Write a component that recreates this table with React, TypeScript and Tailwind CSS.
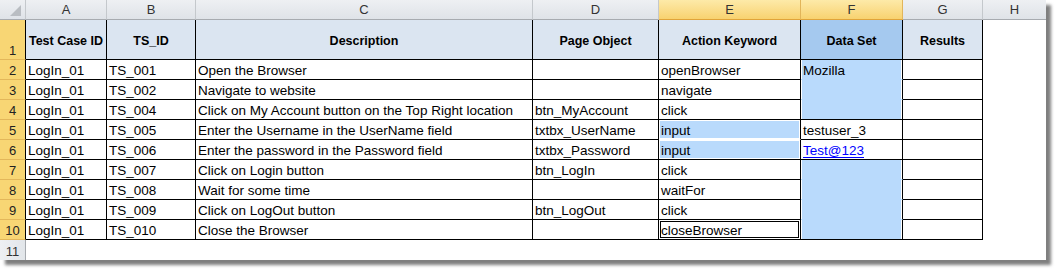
import clsx from 'clsx';

const COLS = ['A', 'B', 'C', 'D', 'E', 'F', 'G', 'H'];
const SELECTED_COLS = ['E', 'F'];

const HEADERS = ['Test Case ID', 'TS_ID', 'Description', 'Page Object', 'Action Keyword', 'Data Set', 'Results'];

type Row = [string, string, string, string, string, string];

const ROWS: Row[] = [
  ['LogIn_01', 'TS_001', 'Open the Browser', '', 'openBrowser', 'Mozilla'],
  ['LogIn_01', 'TS_002', 'Navigate to website', '', 'navigate', ''],
  ['LogIn_01', 'TS_004', 'Click on My Account button on the Top Right location', 'btn_MyAccount', 'click', ''],
  ['LogIn_01', 'TS_005', 'Enter the Username in the UserName field', 'txtbx_UserName', 'input', 'testuser_3'],
  ['LogIn_01', 'TS_006', 'Enter the password in the Password field', 'txtbx_Password', 'input', 'Test@123'],
  ['LogIn_01', 'TS_007', 'Click on Login button', 'btn_LogIn', 'click', ''],
  ['LogIn_01', 'TS_008', 'Wait for some time', '', 'waitFor', ''],
  ['LogIn_01', 'TS_009', 'Click on LogOut button', 'btn_LogOut', 'click', ''],
  ['LogIn_01', 'TS_010', 'Close the Browser', '', 'closeBrowser', ''],
];

// selected blocks: F2:F4, E5:E6, F7:F10 (row numbers are sheet rows)
const selF = (r: number) => (r >= 2 && r <= 4) || (r >= 7 && r <= 10);
const selE = (r: number) => r === 5 || r === 6;

function ColHeader({ label }: { label: string }) {
  const sel = SELECTED_COLS.includes(label);
  return (
    <div
      className={clsx(
        'flex items-center justify-center border-b border-r text-[13px] text-[#333]',
        sel
          ? 'bg-gradient-to-b from-[#fdeaa8] to-[#f8d26f] border-b-[#e0a43a] border-r-[#e2b55a]'
          : 'bg-gradient-to-b from-[#eef0f3] to-[#dfe3e8] border-b-[#a7abb0] border-r-[#c4c8cc]',
        label === 'H' && 'border-r-0'
      )}
    >
      {label}
    </div>
  );
}

function RowHeader({ n }: { n: number }) {
  const sel = n <= 10;
  return (
    <div
      className={clsx(
        'flex items-end justify-center border-b border-r pb-px text-[13px] leading-[15px]',
        sel
          ? 'bg-[#f8d674] border-b-[#e3b75a] border-r-black text-[#222]'
          : 'bg-gradient-to-r from-[#eef0f3] to-[#e2e6ea] border-b-0 border-r-[#a7abb0] text-[#333]'
      )}
    >
      {n}
    </div>
  );
}

export default function App() {
  return (
    <div className="h-[274px] w-[1061px] bg-white" style={{ fontFamily: '"Liberation Sans", Arial, sans-serif' }}>
      <div className="grid h-[260px] w-[1046px] grid-cols-[26px_81px_89px_337px_126px_142px_102px_80px_63px] grid-rows-[20px_40px_repeat(10,20px)] bg-white text-black shadow-[5px_5px_3px_rgba(0,0,0,0.5)]">
        {/* column letters */}
        <div className="relative border-b border-r border-b-[#a7abb0] border-r-[#c4c8cc] bg-gradient-to-b from-[#eef0f3] to-[#dfe3e8]">
          <svg className="absolute bottom-[3px] right-[4px]" width="11" height="11" viewBox="0 0 11 11">
            <polygon points="11,0 11,11 0,11" fill="#b9bdc2" />
          </svg>
        </div>
        {COLS.map((c) => (
          <ColHeader key={c} label={c} />
        ))}

        {/* row 1: table headers */}
        <RowHeader n={1} />
        {HEADERS.map((h) => (
          <div
            key={h}
            className={clsx(
              'flex items-center justify-center whitespace-nowrap border-b border-r border-black pt-[3px] text-[12.5px] font-bold',
              h === 'Data Set' ? 'bg-[#a5c9ef]' : 'bg-[#dbe5f1]'
            )}
          >
            {h}
          </div>
        ))}
        <div />

        {/* rows 2 - 10 */}
        {ROWS.map((row, i) => {
          const r = i + 2;
          return [
            <RowHeader key={`h${r}`} n={r} />,
            ...row.map((val, ci) => {
              const col = COLS[ci];
              const isE = col === 'E';
              const isF = col === 'F';
              const blueF = isF && selF(r);
              const blueE = isE && selE(r);
              return (
                <div
                  key={`${r}${col}`}
                  className={clsx(
                    'relative flex items-end overflow-hidden whitespace-nowrap border-b border-r border-black pb-px pl-[2px] text-[13.5px] leading-[15px]',
                    blueF && 'bg-[#b9dafc] shadow-[inset_1px_0_0_#fff,inset_-1px_0_0_#fff]',
                    blueF && selF(r + 1) && 'border-b-[#b9dafc]',
                    blueE && 'bg-[#b9dafc] shadow-[inset_0_0_0_1px_#fff]',
                    blueE && r === 5 && 'border-b-white'
                  )}
                >
                  {val === 'Test@123' ? (
                    <span className="text-[#0000ff] underline underline-offset-[2px]">{val}</span>
                  ) : (
                    val
                  )}
                  {isE && r === 10 && (
                    <div className="pointer-events-none absolute inset-x-[1px] inset-y-[1px] border border-black" />
                  )}
                </div>
              );
            }),
            <div key={`g${r}`} className="border-b border-r border-black" />,
            <div key={`x${r}`} />,
          ];
        })}

        {/* row 11 */}
        <RowHeader n={11} />
        <div className="col-span-8" />
      </div>
    </div>
  );
}
